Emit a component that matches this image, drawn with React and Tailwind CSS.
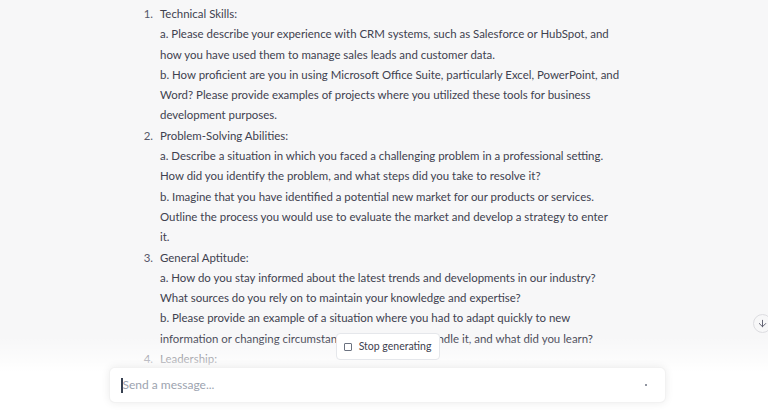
import React from 'react';
import { ArrowDown } from 'lucide-react';

const items = [
  {
    n: '1.',
    title: 'Technical Skills:',
    lines: [
      'a. Please describe your experience with CRM systems, such as Salesforce or HubSpot, and',
      'how you have used them to manage sales leads and customer data.',
      'b. How proficient are you in using Microsoft Office Suite, particularly Excel, PowerPoint, and',
      'Word? Please provide examples of projects where you utilized these tools for business',
      'development purposes.',
    ],
  },
  {
    n: '2.',
    title: 'Problem-Solving Abilities:',
    lines: [
      'a. Describe a situation in which you faced a challenging problem in a professional setting.',
      'How did you identify the problem, and what steps did you take to resolve it?',
      'b. Imagine that you have identified a potential new market for our products or services.',
      'Outline the process you would use to evaluate the market and develop a strategy to enter',
      'it.',
    ],
  },
  {
    n: '3.',
    title: 'General Aptitude:',
    lines: [
      'a. How do you stay informed about the latest trends and developments in our industry?',
      'What sources do you rely on to maintain your knowledge and expertise?',
      'b. Please provide an example of a situation where you had to adapt quickly to new',
      'information or changing circumstances. How did you handle it, and what did you learn?',
    ],
  },
  {
    n: '4.',
    title: 'Leadership:',
    lines: [
      'a. Describe a time when you led a team through a difficult project.',
      'What was your approach, and what was the outcome?',
    ],
  },
];

export default function App() {
  return (
    <div
      className="relative w-[768px] h-[417px] overflow-hidden bg-[#f7f7f8] text-[#40414f]"
      style={{ fontFamily: 'Lato, "Noto Sans", sans-serif' }}
    >
      {/* Conversation */}
      <div className="pt-[4px] pl-[140px] text-[11.45px] leading-[20.3px]">
        {items.map((item) => (
          <div key={item.n}>
            <div className="flex">
              <span className="w-[20px] text-right pr-[7px] text-[#565869]">{item.n}</span>
              <span className="whitespace-nowrap">{item.title}</span>
            </div>
            {item.lines.map((line, i) => (
              <div key={i} className="pl-[20px] whitespace-nowrap">
                {line}
              </div>
            ))}
          </div>
        ))}
      </div>

      {/* Scroll to bottom */}
      <button className="absolute right-[-4px] top-[314px] w-[19px] h-[19px] rounded-full border border-[#dcdce0] bg-[#f7f7f8] flex items-center justify-center text-[#565869]">
        <ArrowDown size={11} strokeWidth={2} />
      </button>

      {/* Bottom composer */}
      <div className="absolute left-0 right-0 bottom-0 h-[95px] bg-gradient-to-b from-[#f7f7f8]/0 from-[15%] via-white/65 via-[42%] to-white to-[52%]">
        <div className="flex justify-center pt-[11px]">
          <button className="h-[27px] w-[104px] flex items-center justify-center gap-[7px] bg-white border border-[#e5e7eb] rounded-[4px] text-[10.5px] text-[#40414f] ml-[7px]">
            <span className="w-[8px] h-[8px] border border-[#6b7280] rounded-[1px]" />
            Stop generating
          </button>
        </div>
        <div className="ml-[109px] mt-[7px] w-[557px] h-[36px] bg-white rounded-[6px] border border-black/5 shadow-[0_0_8px_rgba(0,0,0,0.08)] flex items-center pl-[11px] pr-[18px]">
          <span className="w-[1.5px] h-[15px] bg-[#374151]" />
          <span className="flex-1 text-[12px] text-[#9ca3af]">Send a message...</span>
          <span className="w-[2px] h-[2px] rounded-full bg-[#6b7280]" />
        </div>
      </div>
    </div>
  );
}
